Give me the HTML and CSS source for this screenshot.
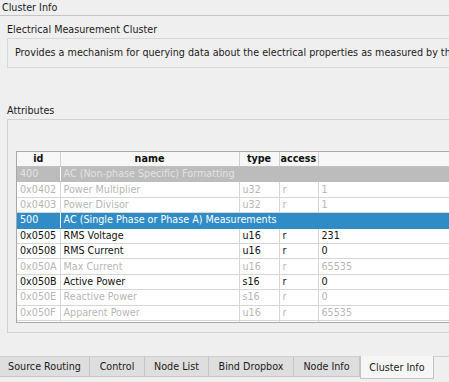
FILE: index.html
```html
<!DOCTYPE html>
<html>
<head>
<meta charset="utf-8">
<link rel="stylesheet" href="styles.css">
</head>
<body>
<div class="title">Cluster Info</div>
<div class="content">
  <div class="label cluster-name">Electrical Measurement Cluster</div>
  <div class="desc">Provides a mechanism for querying data about the electrical properties as measured by the device.</div>
  <div class="label attr-label">Attributes</div>
  <div class="group">
    <div class="table-wrap">
      <table class="grid">
        <colgroup>
          <col class="c-id"><col class="c-name"><col class="c-type"><col class="c-access"><col class="c-value">
        </colgroup>
        <thead>
          <tr><th>id</th><th>name</th><th>type</th><th class="left">access</th><th></th></tr>
        </thead>
        <tbody>
          <tr class="section"><td>400</td><td colspan="4">AC (Non-phase Specific) Formatting</td></tr>
          <tr class="off"><td>0x0402</td><td>Power Multiplier</td><td>u32</td><td>r</td><td>1</td></tr>
          <tr class="off"><td>0x0403</td><td>Power Divisor</td><td>u32</td><td>r</td><td>1</td></tr>
          <tr class="selected"><td>500</td><td colspan="4">AC (Single Phase or Phase A) Measurements</td></tr>
          <tr><td>0x0505</td><td>RMS Voltage</td><td>u16</td><td>r</td><td>231</td></tr>
          <tr><td>0x0508</td><td>RMS Current</td><td>u16</td><td>r</td><td>0</td></tr>
          <tr class="off"><td>0x050A</td><td>Max Current</td><td>u16</td><td>r</td><td>65535</td></tr>
          <tr><td>0x050B</td><td>Active Power</td><td>s16</td><td>r</td><td>0</td></tr>
          <tr class="off"><td>0x050E</td><td>Reactive Power</td><td>s16</td><td>r</td><td>0</td></tr>
          <tr class="off"><td>0x050F</td><td>Apparent Power</td><td>u16</td><td>r</td><td>65535</td></tr>
          <tr><td></td><td></td><td></td><td></td><td></td></tr>
        </tbody>
      </table>
    </div>
  </div>
</div>
<div class="tabbar">
  <div class="tab w1">Source Routing</div>
  <div class="tab w2">Control</div>
  <div class="tab w3">Node List</div>
  <div class="tab w4">Bind Dropbox</div>
  <div class="tab w5">Node Info</div>
  <div class="tab active w6">Cluster Info</div>
</div>
</body>
</html>
```
FILE: styles.css
```css
html, body {
  margin: 0;
  padding: 0;
}
body {
  width: 449px;
  height: 382px;
  overflow: hidden;
  background: #efefef;
  font-family: "DejaVu Sans", sans-serif;
  font-size: 9.6px;
  color: #1a1a1a;
}
.title {
  height: 15px;
  line-height: 16px;
  padding-left: 2px;
  border-bottom: 1px solid #c4c4c4;
  white-space: nowrap;
}
.content {
  padding-left: 7px;
  width: 442px;
  overflow: hidden;
}
.label {
  height: 14px;
  line-height: 14px;
  white-space: nowrap;
}
.cluster-name {
  margin-top: 7px;
}
.desc {
  box-sizing: border-box;
  margin-top: 1px;
  height: 30px;
  line-height: 28px;
  padding-left: 7px;
  border: 1px solid #d8d8d8;
  border-right: none;
  white-space: nowrap;
  overflow: hidden;
  width: 600px;
}
.attr-label {
  margin-top: 36px;
}
.group {
  box-sizing: border-box;
  margin-top: 1px;
  border: 1px solid #d2d2d2;
  border-right: none;
  height: 214px;
  padding: 31px 0 0 8px;
  width: 600px;
}
.table-wrap {
  height: 172px;
  overflow: hidden;
  border: 1px solid #a8a8a8;
  border-right: none;
  box-sizing: border-box;
  background: #ffffff;
  width: 600px;
}
.grid {
  border-collapse: collapse;
  table-layout: fixed;
  width: 560px;
}
.c-id { width: 43px; }
.c-name { width: 179px; }
.c-type { width: 40px; }
.c-access { width: 39px; }
.c-value { width: 259px; }
.grid th {
  height: 14px;
  padding: 0;
  font-weight: bold;
  color: #111;
  background: #f7f7f7;
  border-right: 1px solid #d0d0d0;
  border-bottom: 1px solid #c0c0c0;
  text-align: center;
  white-space: nowrap;
  line-height: 14px;
}
.grid th.left {
  text-align: left;
  padding-left: 1px;
}
.grid td {
  height: 14.4px;
  padding: 0 0 0 3px;
  border-right: 1px solid #d6d6d6;
  border-bottom: 1px solid #d6d6d6;
  white-space: nowrap;
  overflow: hidden;
  line-height: 14px;
  color: #111;
}
.grid tr.off td {
  color: #b4b8b4;
}
.grid tr.section td {
  background: #bcbcbc;
  color: #e2e2e2;
  border-right-color: #bcbcbc;
  border-bottom-color: #bcbcbc;
}
.grid tr.section td:first-child,
.grid tr.selected td:first-child {
  border-right-color: #ffffff;
}
.grid tr.selected td {
  background: #308cc6;
  color: #ffffff;
  border-right-color: #308cc6;
  border-bottom-color: #308cc6;
}
.tabbar {
  margin-top: 23px;
  display: flex;
  align-items: flex-start;
  border-top: 1px solid #cfcfcf;
  height: 25px;
}
.tab {
  box-sizing: border-box;
  height: 20px;
  line-height: 19px;
  text-align: center;
  background: #dedede;
  border-right: 1px solid #c4c4c4;
  border-bottom: 1px solid #c4c4c4;
  white-space: nowrap;
}
.tab.active {
  margin-top: -1px;
  height: 23px;
  line-height: 23px;
  background: #f6f6f6;
  border: 1px solid #c4c4c4;
  border-top: none;
}
.w1 { width: 90px; }
.w2 { width: 55px; }
.w3 { width: 64px; }
.w4 { width: 85px; }
.w5 { width: 66px; }
.w6 { width: 74px; }
```
